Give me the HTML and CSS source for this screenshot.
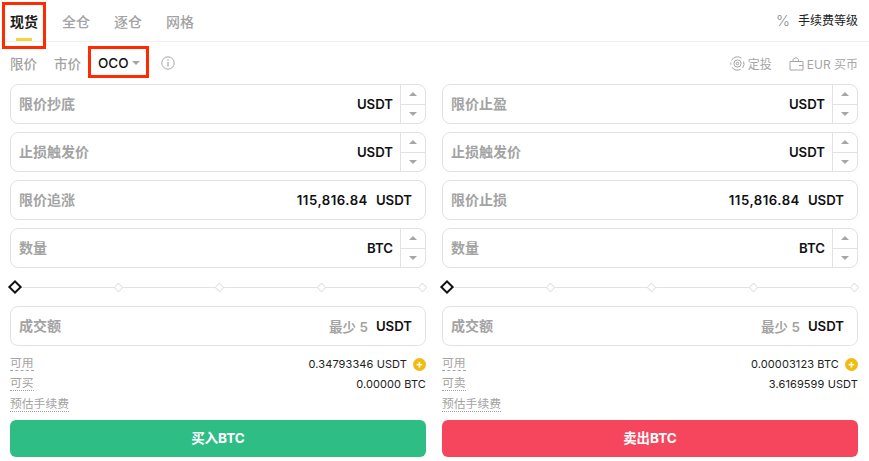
FILE: index.html
```html
<!DOCTYPE html>
<html lang="zh">
<head>
<meta charset="utf-8">
<title>现货</title>
<link rel="stylesheet" href="styles.css">
</head>
<body>
<div class="page">
  <header class="tabs">
    <nav class="tab-list">
      <span class="tab tab-active">现货</span>
      <span class="tab">全仓</span>
      <span class="tab">逐仓</span>
      <span class="tab">网格</span>
    </nav>
    <div class="fee"><span class="fee-pct">%</span><span>手续费等级</span></div>
  </header>
  <div class="subbar">
    <div class="types">
      <span class="type">限价</span>
      <span class="type">市价</span>
      <span class="type type-active">OCO<i class="caret"></i></span>
      <svg class="info" width="14" height="14" viewBox="0 0 14 14"><circle cx="7" cy="7" r="6.2" fill="none" stroke="#a6a6a6"/><path d="M7 6v4.4M7 3.4v1.4" stroke="#a6a6a6" stroke-width="1.2" fill="none"/></svg>
    </div>
    <div class="extras">
      <span class="extra"><svg width="15" height="15" viewBox="0 0 15 15" fill="none" stroke="#a6a6a6"><circle cx="7.5" cy="7.5" r="3.6"/><circle cx="7.5" cy="7.5" r="1.3"/><path d="M1.5 4.5A6.6 6.6 0 0 1 11.5 2.2M13.6 5.5a6.6 6.6 0 0 1-1 6.4M10.5 13.4A6.6 6.6 0 0 1 2 11.4M.9 8.8a6.6 6.6 0 0 1 0-2.400"/></svg>定投</span>
      <span class="extra"><svg width="15" height="15" viewBox="0 0 15 15" fill="none" stroke="#a6a6a6"><path d="M1 5.500h13v8.500H1zM4 5.500V3.500L7 1.500 9.500 3.500v2M10 9.500h4"/></svg>EUR 买币</span>
    </div>
  </div>
  <div class="columns">
    <section class="side">
      <div class="field"><span class="label">限价抄底</span><span class="unit">USDT</span><div class="stepper"><i class="up"></i><i class="down"></i></div></div>
      <div class="field"><span class="label">止损触发价</span><span class="unit">USDT</span><div class="stepper"><i class="up"></i><i class="down"></i></div></div>
      <div class="field field-plain"><span class="label">限价追涨</span><span class="value">115,816.84</span><span class="unit">USDT</span></div>
      <div class="field"><span class="label">数量</span><span class="unit">BTC</span><div class="stepper"><i class="up"></i><i class="down"></i></div></div>
      <div class="slider"><i class="thumb"></i><i class="tick"></i><i class="tick"></i><i class="tick"></i><i class="tick"></i></div>
      <div class="field field-plain"><span class="label">成交额</span><span class="hint">最少 5</span><span class="unit">USDT</span></div>
      <div class="stats">
        <div class="stat"><span class="stat-key dashed">可用</span><span class="stat-val">0.34793346 USDT<i class="plus">+</i></span></div>
        <div class="stat"><span class="stat-key dotted">可买</span><span class="stat-val">0.00000 BTC</span></div>
        <div class="stat"><span class="stat-key dotted">预估手续费</span></div>
      </div>
      <button class="action buy">买入BTC</button>
    </section>
    <section class="side">
      <div class="field"><span class="label">限价止盈</span><span class="unit">USDT</span><div class="stepper"><i class="up"></i><i class="down"></i></div></div>
      <div class="field"><span class="label">止损触发价</span><span class="unit">USDT</span><div class="stepper"><i class="up"></i><i class="down"></i></div></div>
      <div class="field field-plain"><span class="label">限价止损</span><span class="value">115,816.84</span><span class="unit">USDT</span></div>
      <div class="field"><span class="label">数量</span><span class="unit">BTC</span><div class="stepper"><i class="up"></i><i class="down"></i></div></div>
      <div class="slider"><i class="thumb"></i><i class="tick"></i><i class="tick"></i><i class="tick"></i><i class="tick"></i></div>
      <div class="field field-plain"><span class="label">成交额</span><span class="hint">最少 5</span><span class="unit">USDT</span></div>
      <div class="stats">
        <div class="stat"><span class="stat-key dashed">可用</span><span class="stat-val">0.00003123 BTC<i class="plus">+</i></span></div>
        <div class="stat"><span class="stat-key dotted">可卖</span><span class="stat-val">3.6169599 USDT</span></div>
        <div class="stat"><span class="stat-key dotted">预估手续费</span></div>
      </div>
      <button class="action sell">卖出BTC</button>
    </section>
  </div>
  <div class="mark mark-tab"></div>
  <div class="mark mark-oco"></div>
</div>
</body>
</html>
```

FILE: styles.css
```css
* { box-sizing: border-box; }
html, body { margin: 0; padding: 0; background: #fff; }
body {
  font-family: Inter, "Noto Sans CJK SC", sans-serif;
  color: #000;
  overflow: hidden;
}
.page { position: relative; width: 869px; height: 461px; padding: 0 11px 0 10px; }

.tabs {
  height: 42px;
  margin: 0 -11px 0 -10px;
  padding: 0 11px 0 10px;
  border-bottom: 1px solid #f0f0f0;
  display: flex;
  justify-content: space-between;
  align-items: flex-start;
}
.tab-list { display: flex; gap: 24px; }
.tab {
  position: relative;
  font-size: 14px;
  line-height: 20px;
  padding-top: 12px;
  font-weight: 500;
  color: #a3a3a3;
  width: 28px;
  white-space: nowrap;
}
.tab-active { color: #1a1a1a; font-weight: 700; }
.tab-active::after {
  content: "";
  position: absolute;
  left: 6px;
  top: 38px;
  width: 16px;
  height: 3px;
  background: #f8d33a;
}
.fee { display: flex; align-items: center; gap: 8px; font-size: 12px; line-height: 20px; padding-top: 11px; color: #222; }
.fee-pct { color: #8f8f8f; font-size: 15px; font-weight: 300; }

.subbar { height: 42px; display: flex; justify-content: space-between; align-items: center; }
.types { display: flex; align-items: center; }
.type { font-size: 13.5px; font-weight: 500; color: #a3a3a3; margin-right: 17px; }
.type-active { color: #111; font-size: 13.5px; margin-right: 21px; display: flex; align-items: center; gap: 3px; }
.caret { width: 0; height: 0; border: 4px solid transparent; border-top: 4px solid #a6a6a6; border-bottom: 0; }
.info { display: block; }
.extras { display: flex; gap: 17px; }
.extra { display: flex; align-items: center; gap: 3px; font-size: 12px; color: #a6a6a6; }

.columns { display: flex; gap: 16px; }
.side { width: 416px; flex: none; display: flex; flex-direction: column; }

.field {
  height: 40px;
  margin-bottom: 8px;
  border: 1px solid #e2e2e2;
  border-radius: 8px;
  display: flex;
  align-items: center;
  padding-left: 8px;
}
.field-plain { padding-right: 13px; }
.label { font-size: 14px; line-height: 20px; font-weight: 600; color: #a3a3a3; margin-right: auto; }
.unit { font-size: 13.2px; font-weight: 600; color: #111; }
.value { font-size: 13.2px; font-weight: 600; letter-spacing: .5px; color: #111; margin-right: 8px; }
.hint { font-size: 13.5px; font-weight: 600; color: #a3a3a3; margin-right: 8px; }
.stepper {
  width: 25px;
  height: 38px;
  margin-left: 7px;
  border-left: 1px solid #e2e2e2;
  display: flex;
  flex-direction: column;
}
.stepper i { flex: 1; display: flex; align-items: center; justify-content: center; }
.stepper .up { border-bottom: 1px solid #e2e2e2; }
.stepper i::after { content: ""; width: 0; height: 0; border: 4px solid transparent; }
.up::after { border-bottom: 4px solid #a6a6a6 !important; border-top: 0 !important; }
.down::after { border-top: 4px solid #a6a6a6 !important; border-bottom: 0 !important; }

.slider {
  height: 10px;
  margin: 6px 0 14px;
  display: flex;
  justify-content: space-between;
  align-items: center;
  background: linear-gradient(#e2e2e2, #e2e2e2) center / 100% 1px no-repeat;
}
.thumb { width: 10px; height: 10px; background: #fff; border: 2px solid #111; transform: rotate(45deg); }
.tick { width: 7px; height: 7px; background: #fff; border: 1px solid #e2e2e2; transform: rotate(45deg); }

.stats { height: 61px; margin-bottom: 5px; display: flex; flex-direction: column; }
.stat { flex: 1; display: flex; justify-content: space-between; align-items: center; font-size: 11.5px; }
.stat-key { font-size: 11.8px; line-height: 13px; color: #a3a3a3; }
.dashed { border-bottom: 1px dashed #a3a3a3; }
.dotted { border-bottom: 1px dotted #a3a3a3; }
.stat-val { display: flex; align-items: center; color: #222; font-size: 11px; letter-spacing: .1px; }
.plus {
  width: 13px;
  height: 13px;
  margin-left: 6px;
  border-radius: 50%;
  background: #f3ba12;
  color: #fff;
  font: 700 11px/13px Inter, sans-serif;
  text-align: center;
}
.action {
  height: 37px;
  border: 0;
  border-radius: 6px;
  color: #fff;
  font-family: inherit;
  font-size: 13.5px;
  font-weight: 700;
  padding: 0 0 3px;
}
.buy { background: #2ebd85; }
.sell { background: #f6465d; }

.mark { position: absolute; border: 3px solid #ff2a00; pointer-events: none; }
.mark-tab { left: 2px; top: 2px; width: 44px; height: 47px; }
.mark-oco { left: 88px; top: 46px; width: 61px; height: 32px; }
```
